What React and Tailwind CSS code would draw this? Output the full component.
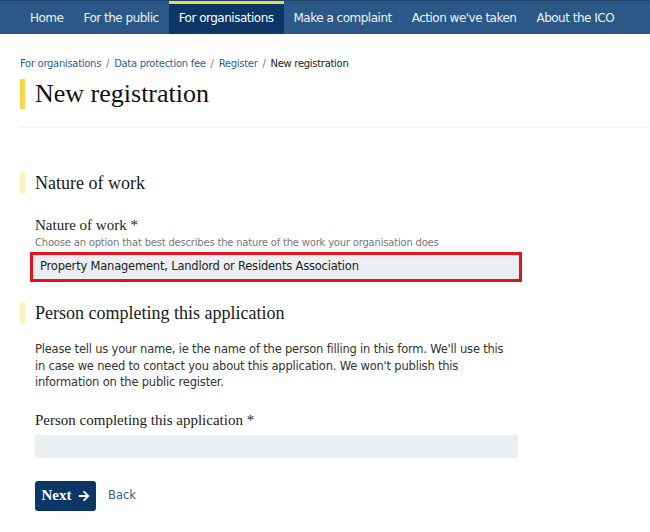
import { FaArrowRight } from 'react-icons/fa';

const sans = 'font-["DejaVu_Sans",Verdana,sans-serif]';
const serif = 'font-["Liberation_Serif",Georgia,serif]';

const navItems = ['Home', 'For the public', 'For organisations', 'Make a complaint', "Action we've taken", 'About the ICO'];

function SectionHeading({ children }) {
  return (
    <div className="flex items-center border-l-[5px] border-[#fdf1c2] pl-[10px]">
      <h2 className={`${serif} text-[18px] leading-[22px] text-[#1a1a1a]`}>{children}</h2>
    </div>
  );
}

export default function App() {
  return (
    <div className={`${sans} min-h-[532px] w-[650px] overflow-hidden bg-white`}>
      <nav className="flex h-[34px] border-t border-[#1c426e] bg-[#2b5886] pl-5">
        {navItems.map((item) =>
          item === 'For organisations' ? (
            <div
              key={item}
              className="flex items-center border-t-[3px] border-[#f2d649] bg-[#0b3666] px-[10px] pb-[2px] text-[12px] tracking-[-0.5px] text-white"
            >
              {item}
            </div>
          ) : (
            <div key={item} className="flex items-center px-[10px] text-[12px] tracking-[-0.5px] text-[#eef2f7]">
              {item}
            </div>
          )
        )}
      </nav>

      <div className="pl-5">
        <div className="mt-[22px] flex gap-[5px] text-[10px] tracking-[-0.3px] text-[#777]">
          <span className="text-[#2a5f98]">For organisations</span>/
          <span className="text-[#2a5f98]">Data protection fee</span>/
          <span className="text-[#2a5f98]">Register</span>/
          <span className="text-[#222]">New registration</span>
        </div>

        <div className="mt-[8px] flex h-[30px] items-center border-l-[5px] border-[#f8d848] pl-[10px]">
          <h1 className={`${serif} text-[26px] leading-[30px] text-[#111]`}>New registration</h1>
        </div>

        <div className="mt-[18px] h-px bg-[#f1f1f1]" />

        <div className="mt-[44px]">
          <SectionHeading>Nature of work</SectionHeading>
        </div>

        <div className="pl-[15px]">
          <div className={`${serif} mt-[22px] text-[15px] leading-[18px] text-[#222]`}>Nature of work *</div>
          <div className="mt-[2px] text-[10px] leading-[14px] tracking-[-0.2px] text-[#777]">
            Choose an option that best describes the nature of the work your organisation does
          </div>
        </div>

        <div className="mt-[2px] ml-[10px] w-[492px] border-[3px] border-[#e8121b]">
          <div className="flex h-[24px] items-center bg-[#eceff2] pl-[7px] text-[11.5px] tracking-[-0.2px] text-[#222]">
            Property Management, Landlord or Residents Association
          </div>
        </div>

        <div className="mt-[20px]">
          <SectionHeading>Person completing this application</SectionHeading>
        </div>

        <div className="pl-[15px]">
          <p className="mt-[17px] w-[475px] text-[11.5px] leading-[16.5px] tracking-[-0.2px] text-[#333]">
            Please tell us your name, ie the name of the person filling in this form. We'll use this in case we
            need to contact you about this application. We won't publish this information on the public register.
          </p>

          <div className={`${serif} mt-[20px] text-[15px] leading-[18px] text-[#222]`}>
            Person completing this application *
          </div>
          <div className="mt-[6px] h-[23px] w-[483px] bg-[#eceff2]" />

          <div className="mt-[23px] flex items-center gap-3">
            <button className={`${serif} flex h-[30px] w-[61px] items-center justify-center gap-[6px] rounded-[3px] bg-[#0b3666] text-[15px] font-bold text-white`}>
              Next <FaArrowRight className="h-[12px] w-[12px]" />
            </button>
            <span className="text-[11.5px] text-[#2a5f98]">Back</span>
          </div>
        </div>
      </div>
    </div>
  );
}
